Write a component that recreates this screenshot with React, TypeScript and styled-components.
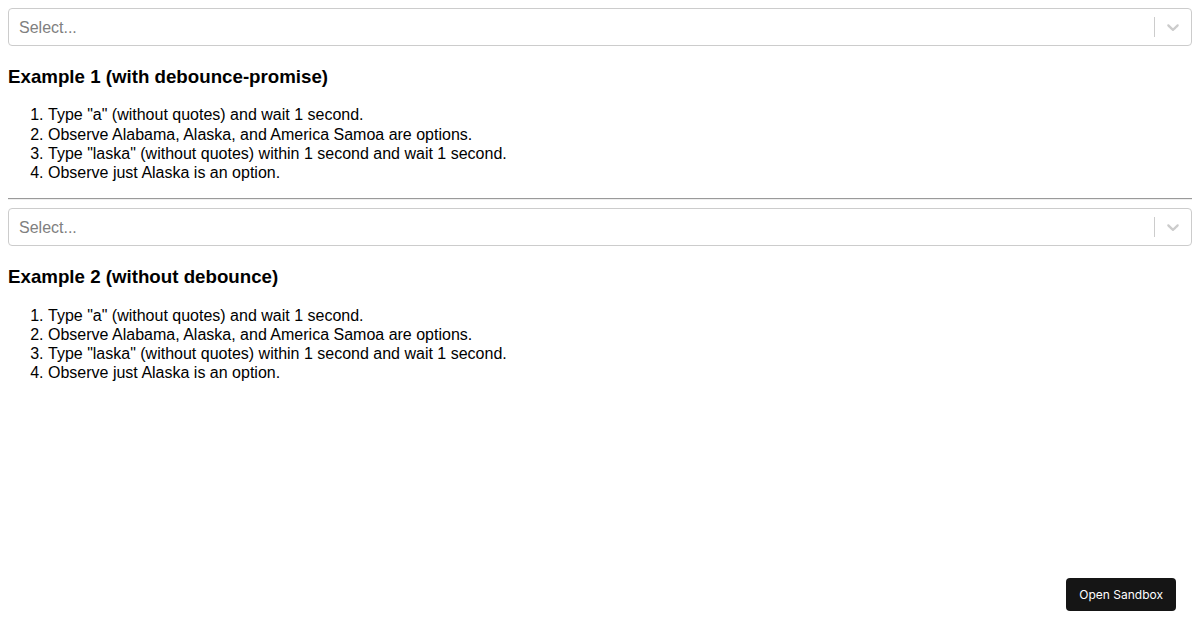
import React from "react";
import styled, {createGlobalStyle} from "styled-components";

const GlobalStyle = createGlobalStyle`
    body {
        margin: 8px;
        font-family: "Liberation Sans", Arial, sans-serif;
        line-height: 1.2;
        color: #000;
        background: #fff;
    }
`;

const Control = styled.div`
    display: flex;
    align-items: center;
    justify-content: space-between;
    min-height: 38px;
    box-sizing: border-box;
    border: 1px solid hsl(0, 0%, 80%);
    border-radius: 4px;
    background: #fff;
    cursor: default;
`;

const ValueContainer = styled.div`
    flex: 1;
    display: grid;
    align-items: center;
    padding: 2px 8px;
`;

const Placeholder = styled.div`
    margin: 0 2px;
    padding-top: 1px;
    color: hsl(0, 0%, 50%);
    font-size: 16px;
`;

const Indicators = styled.div`
    display: flex;
    align-self: stretch;
    align-items: center;
`;

const Separator = styled.span`
    align-self: stretch;
    width: 1px;
    margin: 8px 0;
    background: hsl(0, 0%, 80%);
`;

const Chevron = styled.div`
    display: flex;
    padding: 8px;
    color: hsl(0, 0%, 80%);
`;

const Heading = styled.h3`
    font-size: 1.17em;
    font-weight: bold;
    line-height: normal;
    margin: 1em 0;
    padding-top: 1px;
    margin-bottom: calc(1em - 1px);
`;

const Steps = styled.ol`
    margin: 16px 0;
    padding-left: 40px;
    font-size: 16px;
`;

const Rule = styled.hr`
    margin: 8px 0;
    border: none;
    border-top: 1px solid #9a9a9a;
    border-bottom: 1px solid #eee;
`;

const SandboxButton = styled.button`
    position: fixed;
    right: 24px;
    bottom: 19px;
    height: 33px;
    padding: 0 13px;
    border: none;
    border-radius: 4px;
    background: #151515;
    color: #fff;
    font-family: Inter, "Liberation Sans", sans-serif;
    font-size: 12px;
`;

const Select = () => (
    <Control>
        <ValueContainer>
            <Placeholder>Select...</Placeholder>
        </ValueContainer>
        <Indicators>
            <Separator/>
            <Chevron>
                <svg width="20" height="20" viewBox="0 0 20 20" fill="currentColor">
                    <path d="M4.516 7.548c0.436-0.446 1.043-0.481 1.576 0l3.908 3.747 3.908-3.747c0.533-0.481 1.141-0.446 1.574 0 0.436 0.445 0.408 1.197 0 1.615-0.418 0.418-4.695 4.502-4.695 4.502-0.217 0.223-0.502 0.335-0.787 0.335s-0.57-0.112-0.789-0.335c0 0-4.287-4.084-4.695-4.502s-0.436-1.17 0-1.615z"/>
                </svg>
            </Chevron>
        </Indicators>
    </Control>
);

const steps = [
    'Type "a" (without quotes) and wait 1 second.',
    "Observe Alabama, Alaska, and America Samoa are options.",
    'Type "laska" (without quotes) within 1 second and wait 1 second.',
    "Observe just Alaska is an option.",
];

const Example = ({title}: {title: string}) => (
    <div>
        <Select/>
        <Heading>{title}</Heading>
        <Steps>
            {steps.map(s => <li key={s}>{s}</li>)}
        </Steps>
    </div>
);

const App = () => {
    return (
        <>
            <GlobalStyle/>
            <Example title="Example 1 (with debounce-promise)"/>
            <Rule/>
            <Example title="Example 2 (without debounce)"/>
            <SandboxButton>Open Sandbox</SandboxButton>
        </>
    );
};

export default App;
